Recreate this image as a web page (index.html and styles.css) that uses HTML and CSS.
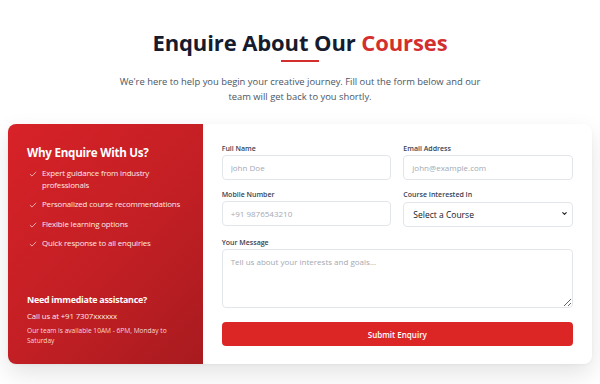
FILE: index.html
```html
<!DOCTYPE html>
<html lang="en">
<head>
<meta charset="utf-8">
<title>Enquire About Our Courses</title>
<link rel="stylesheet" href="styles.css">
</head>
<body>
<section class="enquire">
  <header class="head">
    <h1 class="title">Enquire About Our <span class="accent">Courses</span></h1>
    <div class="rule"></div>
    <p class="lead">We're here to help you begin your creative journey. Fill out the form below and our team will get back to you shortly.</p>
  </header>
  <div class="card">
    <aside class="side">
      <div class="why">
        <h2 class="side-title">Why Enquire With Us?</h2>
        <ul class="perks">
          <li><svg class="tick" viewBox="0 0 10 10"><path d="M1.5 5.4 L3.8 7.6 L8.6 2.6" fill="none" stroke="currentColor" stroke-width="1" stroke-linecap="round" stroke-linejoin="round"/></svg><span>Expert guidance from industry professionals</span></li>
          <li><svg class="tick" viewBox="0 0 10 10"><path d="M1.5 5.4 L3.8 7.6 L8.6 2.6" fill="none" stroke="currentColor" stroke-width="1" stroke-linecap="round" stroke-linejoin="round"/></svg><span>Personalized course recommendations</span></li>
          <li><svg class="tick" viewBox="0 0 10 10"><path d="M1.5 5.4 L3.8 7.6 L8.6 2.6" fill="none" stroke="currentColor" stroke-width="1" stroke-linecap="round" stroke-linejoin="round"/></svg><span>Flexible learning options</span></li>
          <li><svg class="tick" viewBox="0 0 10 10"><path d="M1.5 5.4 L3.8 7.6 L8.6 2.6" fill="none" stroke="currentColor" stroke-width="1" stroke-linecap="round" stroke-linejoin="round"/></svg><span>Quick response to all enquiries</span></li>
        </ul>
      </div>
      <div class="assist">
        <h3 class="assist-title">Need immediate assistance?</h3>
        <p class="call">Call us at +91 7307xxxxxx</p>
        <p class="hours">Our team is available 10AM - 6PM, Monday to Saturday</p>
      </div>
    </aside>
    <form class="form">
      <div class="grid">
        <label class="field">
          <span class="label">Full Name</span>
          <input class="input" type="text" placeholder="John Doe">
        </label>
        <label class="field">
          <span class="label">Email Address</span>
          <input class="input" type="email" placeholder="john@example.com">
        </label>
        <label class="field">
          <span class="label">Mobile Number</span>
          <input class="input" type="tel" placeholder="+91 9876543210">
        </label>
        <label class="field">
          <span class="label">Course Interested In</span>
          <span class="select-wrap">
            <select class="input select">
              <option>Select a Course</option>
            </select>
            <svg class="chev" viewBox="0 0 10 10"><path d="M2.5 3.8 L5 6.3 L7.5 3.8" fill="none" stroke="currentColor" stroke-width="1.6" stroke-linecap="round" stroke-linejoin="round"/></svg>
          </span>
        </label>
      </div>
      <label class="field">
        <span class="label">Your Message</span>
        <textarea class="input area" placeholder="Tell us about your interests and goals..."></textarea>
      </label>
      <button class="submit" type="button">Submit Enquiry</button>
    </form>
  </div>
</section>
</body>
</html>
```

FILE: styles.css
```css
* { box-sizing: border-box; }
html, body { margin: 0; padding: 0; background: #ffffff; }
body {
  font-family: "Open Sans", "Noto Sans", sans-serif;
  color: #1f2937;
}
.enquire {
  padding: 26px 8px 20px;
}
.head {
  display: flex;
  flex-direction: column;
  align-items: center;
  text-align: center;
}
.title {
  margin: 0;
  font-size: 22px;
  line-height: 32px;
  font-weight: 700;
  color: #161b2e;
  letter-spacing: -0.1px;
}
.accent { color: #d32f2f; }
.rule {
  width: 38px;
  height: 2px;
  background: #d32f2f;
  margin-top: 2px;
}
.lead {
  margin: 12px 0 0;
  width: 364px;
  font-size: 9.4px;
  line-height: 15px;
  color: #4b5563;
}
.card {
  margin-top: 20px;
  display: grid;
  grid-template-columns: 1fr 2fr;
  background: #ffffff;
  border-radius: 8px;
  box-shadow: 0 10px 24px rgba(0,0,0,0.11), 0 1px 3px rgba(0,0,0,0.04);
  overflow: hidden;
}
.side {
  background: linear-gradient(135deg, #d72228 0%, #c21f24 55%, #a81b1f 100%);
  color: #ffffff;
  padding: 20px 19px 18px;
  display: flex;
  flex-direction: column;
  justify-content: space-between;
}
.side-title {
  margin: 0;
  font-size: 11.6px;
  line-height: 17px;
  font-weight: 700;
  letter-spacing: -0.25px;
}
.perks {
  list-style: none;
  margin: 7px 0 0;
  padding: 0;
  display: flex;
  flex-direction: column;
  gap: 8px;
}
.perks li {
  display: flex;
  gap: 5px;
  font-size: 7.9px;
  line-height: 11.5px;
  letter-spacing: -0.15px;
  color: #fde8e8;
}
.tick {
  flex: none;
  width: 8px;
  height: 8px;
  margin: 2px 0 0 2px;
  color: #fecaca;
}
.assist-title {
  margin: 0;
  font-size: 8.9px;
  line-height: 13px;
  font-weight: 700;
  letter-spacing: -0.25px;
}
.call {
  margin: 5px 0 0;
  font-size: 7.8px;
  line-height: 11px;
  letter-spacing: -0.1px;
  color: #fde8e8;
}
.hours {
  margin: 4px 0 0;
  font-size: 6.6px;
  line-height: 10px;
  color: #fbd5d5;
}
.form {
  padding: 20px 19px 18px;
  display: flex;
  flex-direction: column;
  gap: 11px;
}
.grid {
  display: grid;
  grid-template-columns: 1fr 1fr;
  column-gap: 12px;
  row-gap: 10px;
}
.field {
  display: flex;
  flex-direction: column;
  gap: 1px;
}
.label {
  font-size: 7px;
  line-height: 10px;
  font-weight: 600;
  color: #374151;
}
.input {
  font-family: inherit;
  width: 100%;
  height: 25px;
  border: 1px solid #e2e5ea;
  border-radius: 4px;
  padding: 0 8px;
  font-size: 8px;
  color: #1f2937;
  background: #ffffff;
  outline: none;
}
.input::placeholder { color: #a3a9b3; }
.select-wrap {
  position: relative;
  display: block;
}
.select {
  -webkit-appearance: none;
  appearance: none;
  font-size: 8.5px;
  padding: 0 6px 0 9px;
  color: #111827;
}
.chev {
  position: absolute;
  right: 5px;
  top: 9px;
  width: 7px;
  height: 7px;
  color: #222;
  pointer-events: none;
}
.area {
  height: 59px;
  padding: 6px 8px;
  resize: vertical;
}
.submit {
  margin-top: 3px;
  height: 24px;
  border: 0;
  border-radius: 4px;
  background: #dc2626;
  color: #ffffff;
  font-family: inherit;
  font-size: 8px;
  font-weight: 600;
}
```
